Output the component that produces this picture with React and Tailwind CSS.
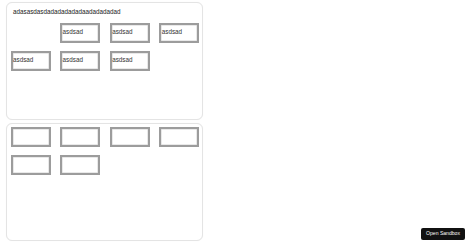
const font = { fontFamily: '"Liberation Sans", Arial, sans-serif' };

function Box({ label }) {
  return (
    <div className="flex h-[20px] w-[40px] items-center border-2 border-[#9c9c9c] bg-white pl-[0.5px] text-[6.3px] leading-none text-[#333] shadow-[inset_0_0_0_0.5px_#d4d4d4]">
      {label}
    </div>
  );
}

function Card({ title, cells }) {
  return (
    <div className="h-[118px] w-[197px] rounded-[6px] border border-[#e4e4e4] bg-white px-[3px] pt-[3px] shadow-[0_0_1px_rgba(0,0,0,0.06)]">
      {title && <p className="mb-[6px] ml-[3px] mt-[0.5px] h-[10px] text-[6.3px] leading-[10px] text-[#222]">{title}</p>}
      <div className="grid grid-cols-[repeat(4,40px)] gap-x-[9.6px] gap-y-[8px] pl-[0.5px]">
        {cells.map((cell, i) =>
          cell === null ? <div key={i} /> : <Box key={i} label={cell} />
        )}
      </div>
    </div>
  );
}

export default function App() {
  return (
    <div className="relative h-[248px] w-[474px] bg-white" style={font}>
      <div className="flex flex-col gap-[3px] pl-[6px] pt-[2px]">
        <Card
          title="adasasdasdadadadadadaadadadadad"
          cells={[null, 'asdsad', 'asdsad', 'asdsad', 'asdsad', 'asdsad', 'asdsad']}
        />
        <Card cells={['', '', '', '', '', '']} />
      </div>
      <button
        type="button"
        className="absolute bottom-[8px] right-[9px] flex h-[12px] w-[44px] items-center justify-center rounded-[2px] bg-[#111] text-[5.1px] leading-none text-white"
      >
        Open Sandbox
      </button>
    </div>
  );
}
